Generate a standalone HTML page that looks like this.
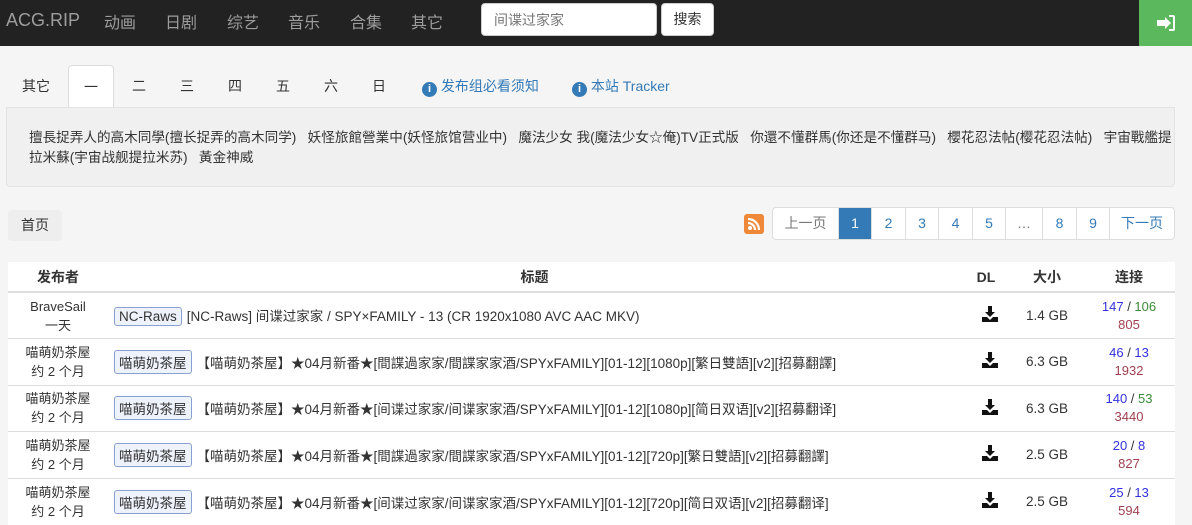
<!DOCTYPE html>
<html><head><meta charset="utf-8"><style>
*{box-sizing:border-box;margin:0;padding:0}
body{width:1192px;height:525px;overflow:hidden;background:#f5f5f5;font-family:"Liberation Sans","Noto Sans CJK SC",sans-serif;font-size:14px;color:#333}
.nav{height:46px;background:#222;position:relative}
.nav .brand{position:absolute;left:6px;top:10px;color:#9d9d9d;font-size:18px}
.nav .item{position:absolute;top:9px;color:#9d9d9d;font-size:16px}
.nav input{position:absolute;left:481px;top:3px;width:176px;height:33px;border:1px solid #ccc;border-radius:4px;background:#fff;padding-left:12px;font-size:14px;color:#777;font-family:inherit}
.nav .btn{position:absolute;left:661px;top:3px;width:53px;height:33px;border:1px solid #ccc;border-radius:4px;background:#fff;font-size:14px;text-align:center;line-height:31px}
.nav .green{position:absolute;left:1139px;top:0;width:53px;height:46px;background:#5cb85c}
.tabs{position:absolute;top:65px;left:0;height:43px;width:1175px}
.tab{position:absolute;top:0;height:43px;line-height:43px;text-align:center;font-size:14px}
.tab.act{background:#fff;border:1px solid #ddd;border-bottom:none;border-radius:4px 4px 0 0}
.blue{color:#337ab7}
.panel{position:absolute;left:6px;top:107px;width:1169px;height:80px;background:#f0f0f0;border:1px solid #e3e3e3;border-radius:0 0 4px 4px;padding:20px 0 0 22px;line-height:20px;font-size:13.6px;color:#333}
.home{position:absolute;left:8px;top:210px;width:54px;height:31px;background:#eee;border-radius:4px;text-align:center;line-height:31px}
.pag{position:absolute;left:772px;top:207px;height:33px;display:flex;border:1px solid #ddd;border-radius:4px;background:#fff;overflow:hidden}
.pag span{height:31px;line-height:31px;text-align:center;border-left:1px solid #ddd;color:#337ab7}
.pag span:first-child{border-left:none;color:#777}
.pag span.a{background:#337ab7;color:#fff}
.rss{position:absolute;left:744px;top:214px;width:20px;height:20px;background:#f0883a;border-radius:3px}
table{position:absolute;left:8px;top:262px;width:1167px;border-collapse:collapse;background:#fff}
th{height:30px;font-weight:bold;font-size:14px;border-bottom:2px solid #ddd;text-align:center}
td{height:46.5px;border-top:1px solid #ddd;font-size:13.5px;vertical-align:middle}
td.p{text-align:center;font-size:13px;line-height:19px;color:#333}
.lb{display:inline-block;background:#eef2fb;border:1px solid #8aa0d0;border-radius:3px;padding:1px 4px;margin:0 5px 0 6px;color:#333}
td.c{text-align:center;line-height:18px;font-size:13px}
.s{color:#3333dd}.l{color:#3a8a3a}.d{color:#a04050}
td.dl{text-align:center;padding-left:8px}
</style></head><body>
<div class="nav">
<div class="brand">ACG.RIP</div>
<div class="item" style="left:104px">动画</div><div class="item" style="left:165px">日剧</div><div class="item" style="left:227px">综艺</div><div class="item" style="left:288px">音乐</div><div class="item" style="left:350px">合集</div><div class="item" style="left:411px">其它</div>
<input value="间谍过家家"><div class="btn">搜索</div>
<div class="green"><svg width="53" height="46" viewBox="0 0 53 46"><path d="M26 17v3h-8v6h8v3l6-6z" fill="#fff"/><path d="M30 15h4a2 2 0 0 1 2 2v12a2 2 0 0 1-2 2h-4v-2h4V17h-4z" fill="#fff"/></svg></div>
</div>
<div class="tabs">
<div class="tab" style="left:14px;width:44px">其它</div>
<div class="tab act" style="left:68px;width:46px">一</div>
<div class="tab" style="left:118px;width:42px">二</div>
<div class="tab" style="left:166px;width:42px">三</div>
<div class="tab" style="left:214px;width:42px">四</div>
<div class="tab" style="left:262px;width:42px">五</div>
<div class="tab" style="left:310px;width:42px">六</div>
<div class="tab" style="left:358px;width:42px">日</div>
<div class="tab blue" style="left:422px"><span style="display:inline-block;width:15px;height:15px;border-radius:50%;background:#337ab7;color:#fff;font-size:11px;line-height:15px;font-weight:bold;vertical-align:-1px">i</span> 发布组必看须知</div>
<div class="tab blue" style="left:572px"><span style="display:inline-block;width:15px;height:15px;border-radius:50%;background:#337ab7;color:#fff;font-size:11px;line-height:15px;font-weight:bold;vertical-align:-1px">i</span> 本站 Tracker</div>
</div>
<div class="panel">擅長捉弄人的高木同學(擅长捉弄的高木同学)&nbsp;&nbsp; 妖怪旅館營業中(妖怪旅馆营业中)&nbsp;&nbsp; 魔法少女 我(魔法少女☆俺)TV正式版&nbsp;&nbsp; 你還不懂群馬(你还是不懂群马)&nbsp;&nbsp; 櫻花忍法帖(樱花忍法帖)&nbsp;&nbsp; 宇宙戰艦提拉米蘇(宇宙战舰提拉米苏)&nbsp;&nbsp; 黃金神威</div>
<div class="home">首页</div>
<div class="rss"><svg width="20" height="20"><circle cx="6" cy="14" r="2" fill="#fff"/><path d="M4 9a7 7 0 0 1 7 7M4 5a11 11 0 0 1 11 11" stroke="#fff" stroke-width="2.2" fill="none"/></svg></div>
<div class="pag"><span style="width:65px">上一页</span><span class="a" style="width:33px">1</span><span style="width:34px">2</span><span style="width:33px">3</span><span style="width:34px">4</span><span style="width:33px">5</span><span style="width:37px;color:#777">…</span><span style="width:34px">8</span><span style="width:33px">9</span><span style="width:65px">下一页</span></div>
<table>
<tr><th style="width:100px">发布者</th><th>标题</th><th style="width:50px">DL</th><th style="width:72px">大小</th><th style="width:92px">连接</th></tr>
<tr><td class="p">BraveSail<br>一天</td><td><span class="lb">NC-Raws</span>[NC-Raws] 间谍过家家 / SPY×FAMILY - 13 (CR 1920x1080 AVC AAC MKV)</td><td class="dl"></td><td style="text-align:center">1.4 GB</td><td class="c"><span class="s">147</span> / <span class="l">106</span><br><span class="d">805</span></td></tr>
<tr><td class="p">喵萌奶茶屋<br>约 2 个月</td><td><span class="lb">喵萌奶茶屋</span>【喵萌奶茶屋】★04月新番★[間諜過家家/間諜家家酒/SPYxFAMILY][01-12][1080p][繁日雙語][v2][招募翻譯]</td><td class="dl"></td><td style="text-align:center">6.3 GB</td><td class="c"><span class="s">46</span> / <span class="s">13</span><br><span class="d">1932</span></td></tr>
<tr><td class="p">喵萌奶茶屋<br>约 2 个月</td><td><span class="lb">喵萌奶茶屋</span>【喵萌奶茶屋】★04月新番★[间谍过家家/间谍家家酒/SPYxFAMILY][01-12][1080p][简日双语][v2][招募翻译]</td><td class="dl"></td><td style="text-align:center">6.3 GB</td><td class="c"><span class="s">140</span> / <span class="l">53</span><br><span class="d">3440</span></td></tr>
<tr><td class="p">喵萌奶茶屋<br>约 2 个月</td><td><span class="lb">喵萌奶茶屋</span>【喵萌奶茶屋】★04月新番★[間諜過家家/間諜家家酒/SPYxFAMILY][01-12][720p][繁日雙語][v2][招募翻譯]</td><td class="dl"></td><td style="text-align:center">2.5 GB</td><td class="c"><span class="s">20</span> / <span class="s">8</span><br><span class="d">827</span></td></tr>
<tr><td class="p">喵萌奶茶屋<br>约 2 个月</td><td><span class="lb">喵萌奶茶屋</span>【喵萌奶茶屋】★04月新番★[间谍过家家/间谍家家酒/SPYxFAMILY][01-12][720p][简日双语][v2][招募翻译]</td><td class="dl"></td><td style="text-align:center">2.5 GB</td><td class="c"><span class="s">25</span> / <span class="s">13</span><br><span class="d">594</span></td></tr>
</table>
<script>
document.querySelectorAll('td.dl').forEach(function(t){t.innerHTML='<svg width="18" height="18" viewBox="0 0 18 18"><path d="M7 1h4v6h3l-5 5-5-5h3z" fill="#111"/><path d="M1 12h5l3 3 3-3h5v5H1z" fill="#111"/></svg>';});
</script>
</body></html>
